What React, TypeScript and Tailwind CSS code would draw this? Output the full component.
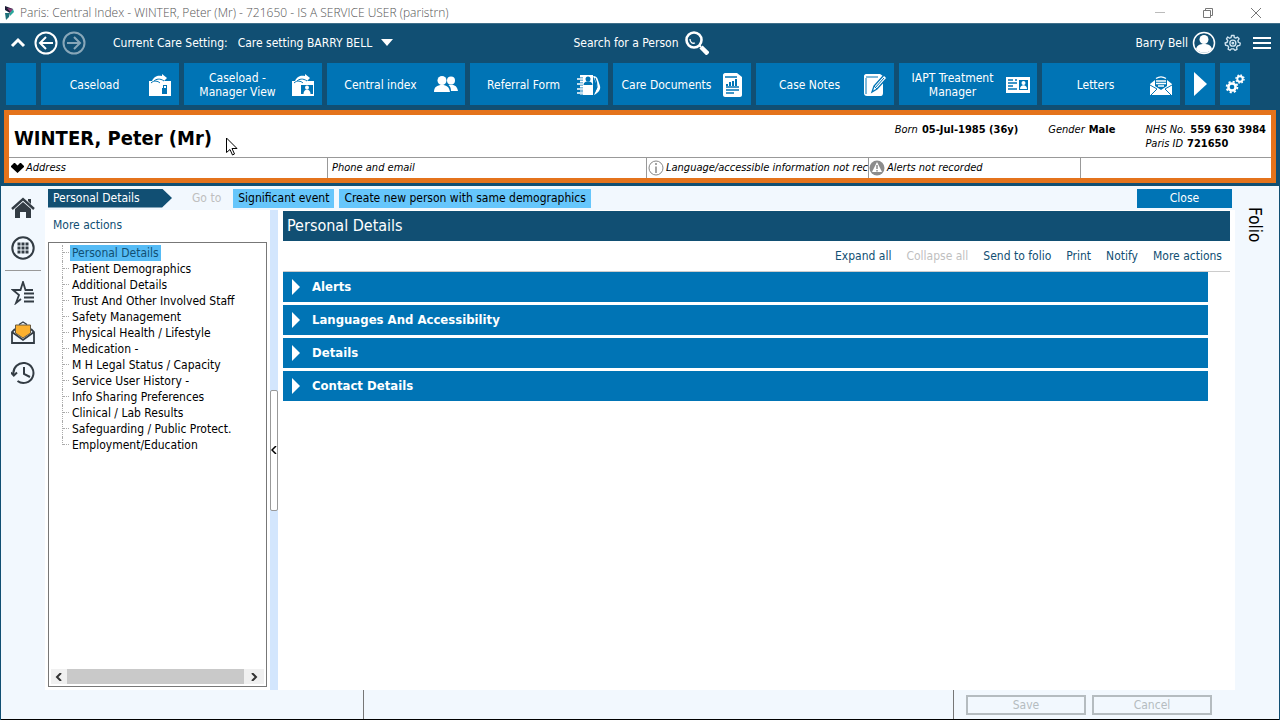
import { useState, type ReactNode } from "react";

const svgProps = { viewBox: "0 0 24 24", fill: "none", "aria-hidden": true } as const;

function BriefcaseIcon({ person = false }: { person?: boolean }) {
  return (
    <svg {...svgProps} className="h-6 w-6">
      <path d="M1 8h3c2-5 6-6 10-5V1l5 4-3 3h7v15H1z" fill="#fff" />
      <path d="M3 10c3-3 7-2 9 0M16 8c-4-3-8-2-10 0" stroke="#0074b5" strokeWidth="1" />
      {person ? (
        <>
          <path d="M10 12h12v9H10z" fill="#0074b5" />
          <circle cx="16" cy="14.500" r="2" fill="#fff" />
          <path d="M12.500 21c0-6 7-6 7 0z" fill="#fff" />
        </>
      ) : (
        <>
          <path d="M12 12h7v9h-7z" fill="#0074b5" />
          <path d="M12 12h3v3h-1v6h-2zM16 13h2v2h-2z" fill="#fff" />
        </>
      )}
    </svg>
  );
}

function PeopleIcon() {
  return (
    <svg {...svgProps} className="h-6 w-6">
      <circle cx="8" cy="7.500" r="4.500" fill="#fff" />
      <path d="M0 19c0-5 3-7 8-7s7 2 8 7z" fill="#fff" />
      <circle cx="17" cy="7.500" r="4" fill="#fff" />
      <path d="M14.500 12c6-1 8.500 1 9.500 6h-7c0-3-1-5-2.500-6z" fill="#fff" />
    </svg>
  );
}

function AddressBookIcon() {
  return (
    <svg {...svgProps} className="h-6 w-6">
      <path d="M3 2h13v20H3z" fill="#fff" />
      <path d="M0 6h6M0 11h6M0 16h6M0 20h6" stroke="#0074b5" strokeWidth="3" />
      <path d="M0 6h6M0 11h6M0 16h6M0 20h6" stroke="#fff" strokeWidth="1.500" />
      <circle cx="11" cy="6" r="2.500" fill="#0074b5" />
      <path d="M6.500 12c0-5 9-5 9 0z" fill="#0074b5" />
      <path d="M16 3c3 0 4 1 5 4l2 6c1 4-2 7-6 9l3-7-1-5z" fill="#fff" />
      <path d="M18 5c1 2 2 6 2 9l-3 6" stroke="#0074b5" strokeWidth="1.200" />
    </svg>
  );
}

function ReportIcon() {
  return (
    <svg {...svgProps} className="h-6 w-6">
      <path d="M5 0h12l5 4v18c0 1-1 2-2 2H5c-1 0-2-1-2-2V2c0-1 1-2 2-2z" fill="#fff" />
      <path d="M5 4h12M6 14h13M6 17h13M6 20h8" stroke="#0074b5" strokeWidth="1.300" />
      <path d="M7 13v-2M10 13V9M13 13V8M16 13V6" stroke="#0074b5" strokeWidth="2" />
    </svg>
  );
}

function NoteIcon() {
  return (
    <svg {...svgProps} className="h-6 w-6">
      <path d="M3 1h14l3 2v17c0 2-1 3-2 3H4c-2 0-3-1-3-3V3c0-1 1-2 2-2z" fill="#fff" />
      <path d="M3 4h12M3 5v16" stroke="#0074b5" />
      <path d="m9 19 2-6L21 2l3 3-10 11z" fill="#fff" stroke="#0074b5" strokeWidth="1.300" />
      <path d="m11 13 3 3M12 15 21 5" stroke="#0074b5" />
    </svg>
  );
}

function IdCardIcon() {
  return (
    <svg {...svgProps} className="h-6 w-6">
      <path d="M0 4h24v16H0z" fill="#fff" />
      <path d="M2 7h5M2 10h9M2 13h5M2 16h9M9 7h2" stroke="#0074b5" strokeWidth="1.400" />
      <path d="M13 7h9v10h-9z" fill="#0074b5" />
      <circle cx="17.500" cy="10" r="2" fill="#fff" />
      <path d="M14 16c0-5 7-5 7 0z" fill="#fff" />
    </svg>
  );
}

function LetterIcon() {
  return (
    <svg {...svgProps} className="h-6 w-6">
      <path d="m1 11 5-4h12l5 4v11H1z" fill="#fff" />
      <path d="M6 5c3-3 9-3 12 0v8l-6 4-6-4z" fill="#0074b5" />
      <path d="M7 5.500c3-2 7-2 10 0M7 8h10M7 10.500h10M9 13h6" stroke="#fff" strokeWidth="1.300" />
      <path d="m1 12 7 4-6 6M23 12l-7 4 6 6" stroke="#0074b5" strokeWidth="1" />
    </svg>
  );
}

function CogShape({ cx, cy, r }: { cx: number; cy: number; r: number }) {
  return (
    <>
      <circle cx={cx} cy={cy} r={r} stroke="#fff" strokeWidth={r * 0.7} />
      <circle cx={cx} cy={cy} r={r * 1.5} stroke="#fff" strokeWidth={r * 0.5} strokeDasharray={`${r * 0.59} ${r * 0.588}`} />
    </>
  );
}

function CogsIcon() {
  return (
    <svg {...svgProps} className="h-6 w-6">
      <CogShape cx={9} cy={15} r={3.6} />
      <CogShape cx={17} cy={7} r={2.7} />
    </svg>
  );
}

function GearIcon() {
  return (
    <svg {...svgProps} className="h-[18px] w-[18px]" stroke="#cfe3f0" strokeWidth="1.800" strokeLinejoin="round">
      <path d="m10 2-.6 2.700-2 .9L5 4 3.300 6.500 5 8.700 4.200 11 1.500 12l.6 3 2.800.4 1.300 2-.7 2.700L8 21.700l2-1.900h2.600l2 2 2.700-1.400-.5-2.800 1.500-1.900 2.800-.5.6-3-2.600-1.200-.6-2.300 1.600-2.300-2-2.300-2.500 1.400-2-.9L13.500 2z" />
      <circle cx="11.800" cy="12.200" r="4" />
      <circle cx="11.800" cy="12.200" r="1" />
    </svg>
  );
}

function ArrowCircle({ left = false }: { left?: boolean }) {
  return (
    <svg {...svgProps} className={left ? "h-6 w-6" : "h-6 w-6 opacity-50"} stroke="#fff" strokeWidth="2">
      <circle cx="12" cy="12" r="10.500" />
      <path d={left ? "M19 12H6M12 6l-6 6 6 6" : "M5 12h13M12 6l6 6-6 6"} />
    </svg>
  );
}

const tiles = [
  { label: "Caseload", icon: <BriefcaseIcon /> },
  { label: "Caseload - Manager View", icon: <BriefcaseIcon person /> },
  { label: "Central index", icon: <PeopleIcon /> },
  { label: "Referral Form", icon: <AddressBookIcon /> },
  { label: "Care Documents", icon: <ReportIcon /> },
  { label: "Case Notes", icon: <NoteIcon /> },
  { label: "IAPT Treatment Manager", icon: <IdCardIcon /> },
  { label: "Letters", icon: <LetterIcon /> },
];

const treeItems = [
  "Personal Details",
  "Patient Demographics",
  "Additional Details",
  "Trust And Other Involved Staff",
  "Safety Management",
  "Physical Health / Lifestyle",
  "Medication -",
  "M H Legal Status / Capacity",
  "Service User History -",
  "Info Sharing Preferences",
  "Clinical / Lab Results",
  "Safeguarding / Public Protect.",
  "Employment/Education",
];

const panelActions = ["Expand all", "Collapse all", "Send to folio", "Print", "Notify", "More actions"];

const sections = ["Alerts", "Languages And Accessibility", "Details", "Contact Details"];

function TitleBar() {
  return (
    <div className="flex h-[23px] items-center bg-white pt-0.5 pl-1 font-['Open_Sans',sans-serif] text-xs font-light text-[#555]">
      <svg viewBox="0 0 12 16" className="mr-1 h-4 w-3" aria-hidden="true">
        <path d="M1 1l8 3-3 4-5-3z" fill="#1b1b35" />
        <path d="M3 3l6 1-2 4z" fill="#8a3b74" />
        <path d="M9 4l1 3-4 4 0-3z" fill="#2aa79b" />
        <path d="M1 8l5 0-1 4-3 3z" fill="#1d6f78" />
      </svg>
      <span className="flex-1">Paris: Central Index - WINTER, Peter (Mr) - 721650 - IS A SERVICE USER (paristrn)</span>
      <div className="flex gap-9 pr-[18px]">
        <button aria-label="Minimise">
          <svg viewBox="0 0 12 12" className="h-3 w-3" stroke="#bbb"><path d="M1 5.500h10" /></svg>
        </button>
        <button aria-label="Restore">
          <svg viewBox="0 0 12 12" className="h-3 w-3" fill="none" stroke="#777"><path d="M1.500 3.500h7v7h-7zM3.500 3.500v-2h7v7h-2" /></svg>
        </button>
        <button aria-label="Close window">
          <svg viewBox="0 0 12 12" className="h-3 w-3" stroke="#777"><path d="M1 1l10 10M11 1 1 11" /></svg>
        </button>
      </div>
    </div>
  );
}

function TopBar() {
  return (
    <div className="grid h-[39px] grid-cols-[1fr_auto_1fr] items-center pr-2 pb-px pl-2.5 text-white">
      <div className="flex items-center">
        <button aria-label="Collapse" className="mr-2">
          <svg viewBox="0 0 16 16" className="h-4 w-4" fill="none" stroke="#fff" strokeWidth="3"><path d="m2 11 6-6 6 6" /></svg>
        </button>
        <button aria-label="Back" className="mr-1"><ArrowCircle left /></button>
        <button aria-label="Forward"><ArrowCircle /></button>
        <label htmlFor="care-setting" className="mr-2.5 ml-[27px]">Current Care Setting:</label>
        <div className="relative">
          <select id="care-setting" className="appearance-none bg-transparent pr-5 outline-none">
            <option>Care setting BARRY BELL</option>
          </select>
          <svg viewBox="0 0 12 7" className="pointer-events-none absolute top-1 right-0 h-[7px] w-3" fill="#fff" aria-hidden="true">
            <path d="M0 0h12L6 7z" />
          </svg>
        </div>
      </div>
      <button className="flex items-center gap-1.5">
        Search for a Person
        <svg {...svgProps} className="h-6 w-6" stroke="#fff">
          <circle cx="9" cy="9" r="7.500" strokeWidth="2.600" />
          <path d="M5 8c0 3 2 5 5 4" strokeWidth="1.300" />
          <path d="m14 14 2 2" strokeWidth="2" />
          <path d="m16 16 7 7" strokeWidth="4.500" />
        </svg>
      </button>
      <div className="flex items-center justify-end">
        <button className="flex items-center gap-1">
          Barry Bell
          <svg {...svgProps} className="h-6 w-6">
            <circle cx="12" cy="12" r="10.500" stroke="#fff" strokeWidth="1.500" />
            <circle cx="12" cy="8.500" r="4.500" fill="#fff" />
            <path d="M4 18c1-4 4-5 8-5s7 1 8 5c-4 5-12 5-16 0z" fill="#fff" />
          </svg>
        </button>
        <button aria-label="Settings" className="ml-2"><GearIcon /></button>
        <button aria-label="Menu" className="ml-2.5">
          <svg viewBox="0 0 20 14" className="h-3.5 w-5" stroke="#fff" strokeWidth="2"><path d="M1 2h18M1 7h18M1 12h18" /></svg>
        </button>
      </div>
    </div>
  );
}

function TileBar() {
  return (
    <nav className="flex h-[42px] gap-[5px] pr-[30px] pl-1.5 text-white">
      <div className="w-[30px] bg-[#0074b5]" />
      {tiles.map((tile) => (
        <button key={tile.label} className="flex min-w-0 flex-1 items-center bg-[#0074b5] pt-0.5 pr-[7px] leading-[14px]">
          <span className="flex-1 px-1">{tile.label}</span>
          {tile.icon}
        </button>
      ))}
      <button aria-label="More modules" className="flex w-[30px] items-center justify-center bg-[#0074b5]">
        <svg viewBox="0 0 13 24" className="h-6 w-[13px]" fill="#fff"><path d="M0 0l13 12L0 24z" /></svg>
      </button>
      <button aria-label="Configure" className="flex w-[30px] items-center justify-center bg-[#0074b5]">
        <CogsIcon />
      </button>
    </nav>
  );
}

function PatientBanner() {
  return (
    <section className="relative mx-1 mt-[5px] mb-[3px] border-[5px] border-[#e4731c] bg-white text-[11px] text-black">
      <div className="flex h-[42px] items-start pr-[5px] pl-[5px]">
        <h1 className="flex-1 self-center pt-1 text-xl font-bold">WINTER, Peter (Mr)</h1>
        <dl className="flex gap-[30px] pt-2 leading-[14px]">
          <div className="flex gap-1"><dt className="italic">Born</dt><dd className="font-bold">05-Jul-1985 (36y)</dd></div>
          <div className="flex gap-1"><dt className="italic">Gender</dt><dd className="font-bold">Male</dd></div>
          <div>
            <div className="flex gap-1"><dt className="italic">NHS No.</dt><dd className="font-bold">559 630 3984</dd></div>
            <div className="flex gap-1"><dt className="italic">Paris ID</dt><dd className="font-bold">721650</dd></div>
          </div>
        </dl>
      </div>
      <div className="grid h-[21px] grid-cols-[319fr_319fr_222fr_212fr_190fr] divide-x divide-[#999] border-t border-[#999] whitespace-nowrap">
        <button className="flex items-center gap-0.5 overflow-hidden pl-0.5 italic">
          <svg viewBox="0 0 13 10" className="h-2.5 w-[13px]" aria-hidden="true"><path d="M0 3 3 0h1l2.500 2.500L9 0h1l3 3v1L6.500 10 0 4z" /></svg>
          Address
        </button>
        <div className="flex items-center overflow-hidden pl-1 italic">Phone and email</div>
        <div className="flex items-center gap-0.5 overflow-hidden pl-px italic">
          <svg viewBox="0 0 16 16" className="h-4 w-4 shrink-0" fill="none" stroke="#888" aria-hidden="true">
            <circle cx="8" cy="8" r="7" />
            <path d="M8 6.500V13M8 3v2" strokeWidth="1.500" />
          </svg>
          Language/accessible information not rec
        </div>
        <div className="flex items-center gap-0.5 overflow-hidden italic">
          <svg viewBox="0 0 16 16" className="h-4 w-4 shrink-0" aria-hidden="true">
            <circle cx="8" cy="8" r="7.500" fill="#8c8c8c" />
            <path d="M8 2l5 10H3z" fill="#fff" />
            <path d="M8 5v4M8 10v1.500" stroke="#8c8c8c" strokeWidth="1.500" />
          </svg>
          Alerts not recorded
        </div>
        <div />
      </div>
      <svg viewBox="0 0 12 19" className="absolute top-[22px] left-[217px] h-[19px] w-3" fill="#fff" stroke="#000" aria-hidden="true">
        <path d="M.500 1v14.500l3.500-3 2.500 5.500 2-1-2.500-5.500h5z" />
      </svg>
    </section>
  );
}

function RailButton({ label, children }: { label: string; children: ReactNode }) {
  return (
    <button aria-label={label} className="flex h-10 w-full items-center justify-center">
      <svg {...svgProps} className="h-6 w-6" stroke="#333c44" strokeWidth="2">{children}</svg>
    </button>
  );
}

function LeftRail() {
  return (
    <aside className="w-11 bg-[#f2f8fe] pt-0.5">
      <RailButton label="Home">
        <path d="m1 13 11-10 11 10" strokeWidth="2.400" />
        <path d="M4 13v9h5v-6h6v6h5v-9l-8-7zM17 3h3v5l-3-3z" fill="#333c44" stroke="none" />
      </RailButton>
      <RailButton label="Apps">
        <circle cx="12" cy="12" r="10.700" />
        <path d="M6.500 8h3M10.500 8h3M14.500 8h3M6.500 12h3M10.500 12h3M14.500 12h3M6.500 16h3M10.500 16h3M14.500 16h3" strokeWidth="3" />
      </RailButton>
      <hr className="mx-1 mt-0.5 mb-0.5 border-[#999]" />
      <RailButton label="Favourites">
        <path d="M22 9h-7.500L12 1 9.500 9H2l6 5-3 8 5-4" strokeWidth="1.800" />
        <path d="M13 12.500h10M13 16.500h10M13 20.500h10" strokeWidth="1.800" />
      </RailButton>
      <RailButton label="Messages">
        <path d="M4 8 1 11v11h22V11l-3-3M1 11l11 8 11-8" strokeWidth="1.800" />
        <path d="M4.500 4h15v8L12 17l-7.500-5z" fill="#fbb02e" stroke="#6a5a3d" strokeWidth="1" />
        <path d="M8 3.500 12 1l4 2.500" strokeWidth="1.300" />
      </RailButton>
      <RailButton label="History">
        <path d="M2.500 13a10 10 0 1 1 4 7" />
        <path d="m0 11.500 2.800 3 3.200-3M13 6v7l6 3" />
      </RailButton>
    </aside>
  );
}

function TreePanel() {
  const [selected, setSelected] = useState("Personal Details");

  return (
    <div className="flex w-[225px] flex-col bg-white pb-[3px] pl-[3px]">
      <button className="px-[5px] pt-[7px] pb-[9px] text-left leading-4 text-[#114f73]">More actions</button>
      <div className="mr-[3px] flex flex-1 flex-col border border-[#777]">
        <ul className="flex-1 pt-0.5 pl-[13px]">
          {treeItems.map((item, index) => (
            <li key={item} className="flex h-4 items-start">
              <span className={index === treeItems.length - 1 ? "h-2 w-2 border-l border-dotted border-[#aaa] pt-[7px]" : "h-4 w-2 border-l border-dotted border-[#aaa] pt-[7px]"}>
                <span className="block w-1.5 border-t border-dotted border-[#aaa]" />
              </span>
              <button
                onClick={() => setSelected(item)}
                className={item === selected ? "bg-[#55bbf5] px-0.5 leading-4 text-[#114f73]" : "px-0.5 leading-4 text-black"}
              >
                {item}
              </button>
            </li>
          ))}
        </ul>
        <div className="m-0.5 flex h-[15px] bg-[#f0f0f0]">
          <button aria-label="Scroll left" className="flex w-4 items-center justify-center">
            <svg viewBox="0 0 8 8" className="h-2 w-2" fill="none" stroke="#333" strokeWidth="2"><path d="M6 0 2 4l4 4" /></svg>
          </button>
          <div className="flex-1 bg-[#c9c9c9]" />
          <button aria-label="Scroll right" className="flex w-5 items-center justify-center">
            <svg viewBox="0 0 8 8" className="h-2 w-2" fill="none" stroke="#333" strokeWidth="2"><path d="m2 0 4 4-4 4" /></svg>
          </button>
        </div>
      </div>
    </div>
  );
}

function DetailPanel() {
  const [open, setOpen] = useState<string | null>(null);

  return (
    <div className="flex-1 bg-white pt-px pr-[5px] pl-[5px]">
      <h2 className="bg-[#114f73] px-1 text-base leading-[30px] text-white">Personal Details</h2>
      <div className="flex justify-end gap-[15px] border-b border-[#ccc] px-2 pt-[7px] pb-[7px] leading-4 text-[#114f73]">
        {panelActions.map((action) => (
          <button key={action} disabled={action === "Collapse all"} className="disabled:text-[#bfbfbf]">
            {action}
          </button>
        ))}
      </div>
      <div className="mr-[22px] flex flex-col gap-[3px]">
        {sections.map((section) => (
          <button
            key={section}
            aria-expanded={open === section}
            onClick={() => setOpen(open === section ? null : section)}
            className="flex h-[30px] items-center gap-3 bg-[#0074b5] pl-[9px] text-left text-[13px] font-bold text-white"
          >
            <svg viewBox="0 0 8 16" className="h-4 w-2" fill="#fff" aria-hidden="true"><path d="M0 0l8 8-8 8z" /></svg>
            {section}
          </button>
        ))}
      </div>
    </div>
  );
}

export default function App() {
  return (
    <div className="flex min-h-screen flex-col bg-[#114f73] font-['DejaVu_Sans_Condensed','DejaVu_Sans',sans-serif] text-xs">
      <TitleBar />
      <header className="border-t border-[#3f6f8a]">
        <TopBar />
        <TileBar />
        <PatientBanner />
      </header>
      <main className="mx-px flex flex-1 flex-col border-b border-black bg-[#f2f8fe]">
        <div className="flex flex-1">
          <LeftRail />
          <div className="flex min-w-0 flex-1 flex-col">
            <div className="flex h-6 items-center pr-[3px] pl-[3px]">
              <div className="h-[19px] w-[124px] bg-[#114f73] pl-[5px] leading-[19px] text-white [clip-path:polygon(0_0,92%_0,100%_50%,92%_100%,0_100%)]">
                Personal Details
              </div>
              <span className="ml-5 text-[#bfbfbf]">Go to</span>
              <button className="ml-3 h-[19px] bg-[#66c6fb] px-[5px] text-black">Significant event</button>
              <button className="ml-[5px] h-[19px] bg-[#66c6fb] px-[5px] text-black">Create new person with same demographics</button>
              <button className="ml-auto h-[19px] w-[95px] bg-[#0074b5] text-white">Close</button>
            </div>
            <div className="flex flex-1">
              <TreePanel />
              <div className="flex w-2 flex-col justify-center bg-[#d3e6fd]">
                <button aria-label="Collapse panel" className="flex h-[121px] items-center justify-center rounded-xs border border-[#999] bg-white">
                  <svg viewBox="0 0 6 8" className="h-2 w-1.5" fill="none" stroke="#000" strokeWidth="1.500"><path d="M5 0 1 4l4 4" /></svg>
                </button>
              </div>
              <DetailPanel />
            </div>
          </div>
          <aside className="w-11 pt-[21px]">
            <button className="ml-2 text-[17px] leading-6 text-black [writing-mode:vertical-rl]">Folio</button>
          </aside>
        </div>
        <footer className="flex h-[29px] pr-[67px] text-[#b5bcc0]">
          <div className="w-[363px] border-r border-[#777]" />
          <div className="flex-1 border-r border-[#777]" />
          <div className="flex items-center gap-1.5 pl-3">
            <button disabled className="h-5 w-[120px] border-2 border-[#b5bcc0]">Save</button>
            <button disabled className="h-5 w-[120px] border-2 border-[#b5bcc0]">Cancel</button>
          </div>
        </footer>
      </main>
    </div>
  );
}
